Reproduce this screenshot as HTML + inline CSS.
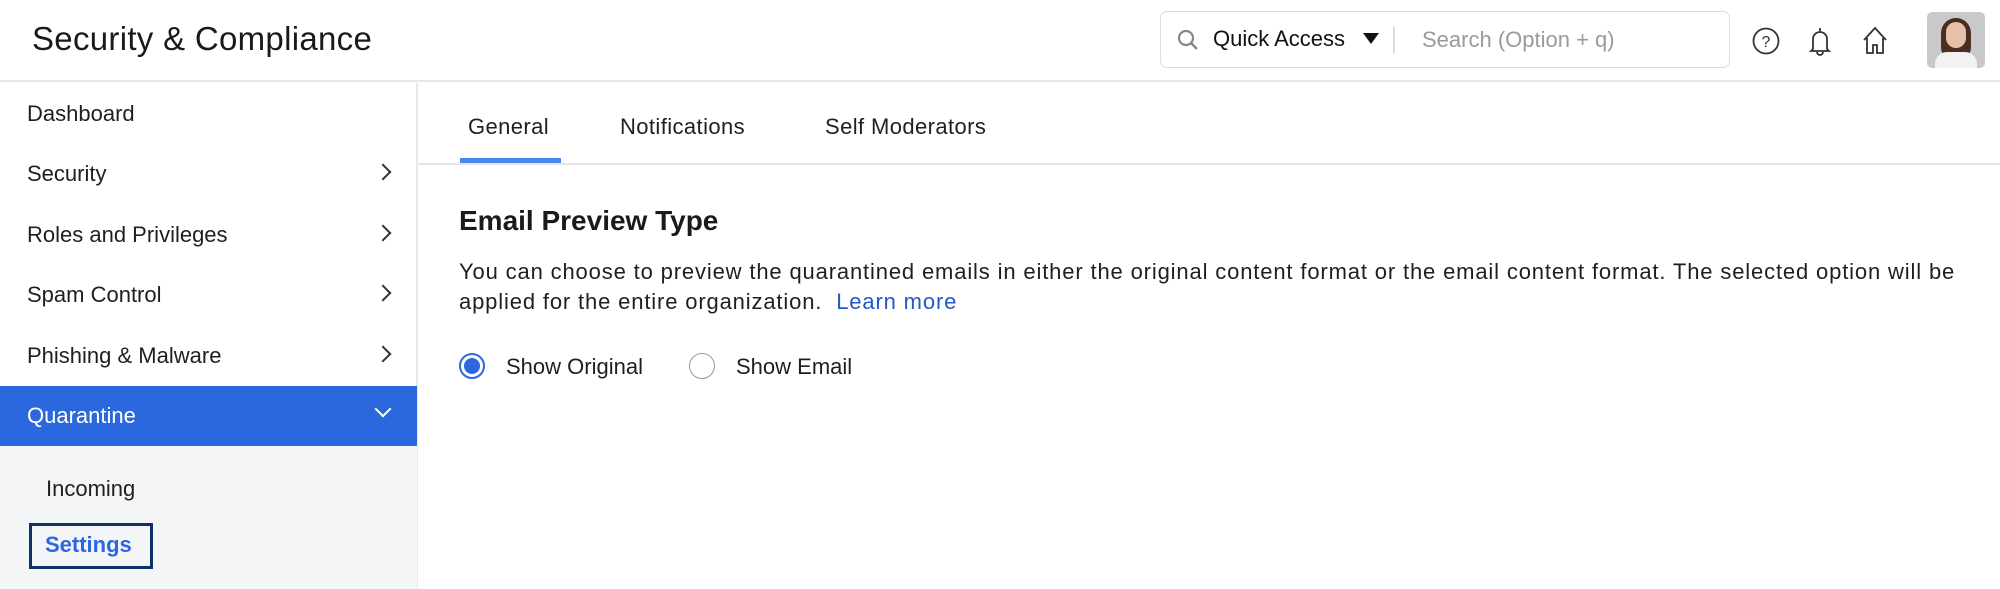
<!DOCTYPE html>
<html><head><meta charset="utf-8"><style>
*{margin:0;padding:0;box-sizing:border-box}
body{width:2000px;height:589px;overflow:hidden;background:#fff;font-family:"Liberation Sans",sans-serif;color:#1f1f1f;position:relative}
.abs{position:absolute}
.hdr{left:0;top:0;width:2000px;height:82px;border-bottom:2px solid #e6e6e6}
.title{left:32px;top:20px;font-size:33px;color:#1a1a1a;letter-spacing:0.3px}
.search{left:1160px;top:11px;width:570px;height:57px;border:1.5px solid #dcdcdc;border-radius:7px}
.side{left:0;top:83px;width:418px;height:506px;border-right:2px solid #e8e8e8}
.item{position:absolute;left:0;width:417px;height:60px;font-size:22px;padding-left:27px;line-height:60px;color:#1f1f1f}
.chev{position:absolute;right:28px;top:22px;width:12px;height:12px;border-right:2.5px solid #333;border-top:2.5px solid #333;transform:rotate(45deg)}
.tab{top:114px;font-size:22px;color:#1f1f1f;letter-spacing:0.4px}
p{font-size:22px;line-height:30px;letter-spacing:0.85px;white-space:nowrap}
</style></head><body>
<div class="abs hdr"></div>
<div class="abs title">Security &amp; Compliance</div>
<div class="abs search"></div>
<svg class="abs" style="left:1177px;top:29px" width="22" height="22" viewBox="0 0 22 22"><circle cx="9" cy="9" r="7" fill="none" stroke="#888" stroke-width="2.2"/><line x1="14" y1="14" x2="20" y2="20" stroke="#888" stroke-width="2.4"/></svg>
<div class="abs" style="left:1213px;top:26px;font-size:22px;color:#111">Quick Access</div>
<div class="abs" style="left:1363px;top:33px;width:0;height:0;border-left:8px solid transparent;border-right:8px solid transparent;border-top:11px solid #111"></div>
<div class="abs" style="left:1393px;top:26px;width:1.5px;height:28px;background:#ddd"></div>
<div class="abs" style="left:1422px;top:27px;font-size:22px;color:#9a9a9a">Search (Option + q)</div>
<svg class="abs" style="left:1751px;top:26px" width="30" height="30" viewBox="0 0 30 30"><circle cx="15" cy="15" r="12.5" fill="none" stroke="#333" stroke-width="1.8"/><text x="15" y="21" font-size="16" text-anchor="middle" font-family="Liberation Sans" fill="#333">?</text></svg>
<svg class="abs" style="left:1808px;top:25px" width="24" height="32" viewBox="0 0 24 32"><path d="M12 3v3M5 24V14a7 7 0 0 1 14 0v10l2 2H3z M9 27a3 3 0 0 0 6 0" fill="none" stroke="#333" stroke-width="1.8"/></svg>
<svg class="abs" style="left:1861px;top:25px" width="28" height="30" viewBox="0 0 28 30"><path d="M3 15L14 3l11 12M6 13v15h6v-8h4v8h6V13" fill="none" stroke="#333" stroke-width="1.8"/></svg>
<div class="abs" style="left:1927px;top:12px;width:58px;height:56px;border-radius:5px;background:#c9c9cc;overflow:hidden">
<div class="abs" style="left:14px;top:6px;width:30px;height:44px;border-radius:15px;background:#4a2e22"></div>
<div class="abs" style="left:19px;top:10px;width:20px;height:26px;border-radius:10px;background:#e6c0a8"></div>
<div class="abs" style="left:8px;top:40px;width:42px;height:24px;border-radius:12px 12px 0 0;background:#f2f2f2"></div>
</div>

<div class="abs side"></div>
<div class="item" style="top:84px">Dashboard</div>
<div class="item" style="top:144px">Security<span class="chev"></span></div>
<div class="item" style="top:205px">Roles and Privileges<span class="chev"></span></div>
<div class="item" style="top:265px">Spam Control<span class="chev"></span></div>
<div class="item" style="top:326px">Phishing &amp; Malware<span class="chev"></span></div>
<div class="item" style="top:386px;background:#2b67dd;color:#fff">Quarantine<span class="chev" style="border-color:#fff;transform:rotate(135deg);top:17px"></span></div>
<div class="abs" style="left:0;top:446px;width:417px;height:143px;background:#f4f5f7"></div>
<div class="abs" style="left:46px;top:476px;font-size:22px">Incoming</div>
<div class="abs" style="left:29px;top:523px;width:124px;height:46px;border:3px solid #0d3366"></div>
<div class="abs" style="left:45px;top:532px;font-size:22px;font-weight:bold;color:#2b67dd">Settings</div>

<div class="abs tab" style="left:468px">General</div>
<div class="abs tab" style="left:620px">Notifications</div>
<div class="abs tab" style="left:825px">Self Moderators</div>
<div class="abs" style="left:419px;top:163px;width:1581px;height:2px;background:#e6e6e6"></div>
<div class="abs" style="left:460px;top:158px;width:101px;height:5px;background:#4d85ee"></div>

<div class="abs" style="left:459px;top:205px;font-size:28px;font-weight:bold;color:#1a1a1a">Email Preview Type</div>
<p class="abs" style="left:459px;top:257px">You can choose to preview the quarantined emails in either the original content format or the email content format. The selected option will be<br>applied for the entire organization.&nbsp; <span style="color:#2458c6">Learn more</span></p>
<div class="abs" style="left:459px;top:353px;width:26px;height:26px;border-radius:50%;border:2px solid #2b67dd"></div>
<div class="abs" style="left:464px;top:358px;width:16px;height:16px;border-radius:50%;background:#2b67dd"></div>
<div class="abs" style="left:506px;top:354px;font-size:22px">Show Original</div>
<div class="abs" style="left:689px;top:353px;width:26px;height:26px;border-radius:50%;border:1.5px solid #999"></div>
<div class="abs" style="left:736px;top:354px;font-size:22px">Show Email</div>
</body></html>
